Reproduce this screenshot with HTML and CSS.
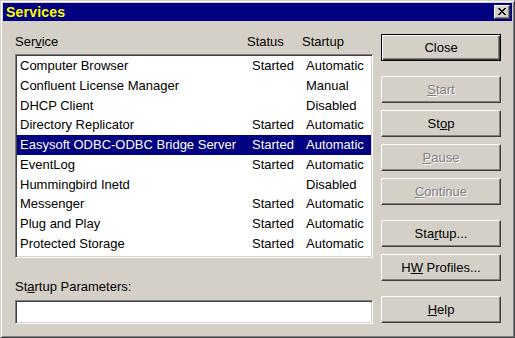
FILE: index.html
```html
<!DOCTYPE html>
<html lang="en">
<head>
    <meta charset="UTF-8">
    <title>Services</title>
    <link rel="stylesheet" href="styles.css">
</head>
<body>

<div class="window">
    <div class="titlebar">
        <span class="title">Services</span>
        <span class="title-close">
            <svg width="8" height="7" viewBox="0 0 8 7">
                <path d="M0 0h2v1h1v1h2v-1h1v-1h2v1h-1v1h-1v1h-1v1h1v1h1v1h1v1h-2v-1h-1v-1h-2v1h-1v1h-2v-1h1v-1h1v-1h1v-1h-1v-1h-1z" fill="#000"/>
            </svg>
        </span>
    </div>

    <div class="content">
        <div class="main">
            <div class="list-head">
                <span>Ser<u>v</u>ice</span>
                <span>Status</span>
                <span>Startup</span>
            </div>

            <!-- services list -->
            <div class="list">
                <div class="row"><span>Computer Browser</span><span>Started</span><span>Automatic</span></div>
                <div class="row"><span>Confluent License Manager</span><span></span><span>Manual</span></div>
                <div class="row"><span>DHCP Client</span><span></span><span>Disabled</span></div>
                <div class="row"><span>Directory Replicator</span><span>Started</span><span>Automatic</span></div>
                <div class="row selected"><span>Easysoft ODBC-ODBC Bridge Server</span><span>Started</span><span>Automatic</span></div>
                <div class="row"><span>EventLog</span><span>Started</span><span>Automatic</span></div>
                <div class="row"><span>Hummingbird Inetd</span><span></span><span>Disabled</span></div>
                <div class="row"><span>Messenger</span><span>Started</span><span>Automatic</span></div>
                <div class="row"><span>Plug and Play</span><span>Started</span><span>Automatic</span></div>
                <div class="row"><span>Protected Storage</span><span>Started</span><span>Automatic</span></div>
            </div>

            <div class="param-label">St<u>a</u>rtup Parameters:</div>
            <div class="param-input"></div>
        </div>

        <div class="buttons">
            <div class="btn default"><span>Close</span></div>
            <div class="btn disabled group"><span><u>S</u>tart</span></div>
            <div class="btn"><span>St<u>o</u>p</span></div>
            <div class="btn disabled"><span><u>P</u>ause</span></div>
            <div class="btn disabled"><span><u>C</u>ontinue</span></div>
            <div class="btn group"><span>Sta<u>r</u>tup...</span></div>
            <div class="btn"><span>H<u>W</u> Profiles...</span></div>
            <div class="btn group"><span><u>H</u>elp</span></div>
        </div>
    </div>
</div>

</body>
</html>
```

FILE: styles.css
```css
body {
    margin: 0;
    padding: 0;
    font-family: "Liberation Sans", Arial, sans-serif;
    font-size: 13px;
    color: #000;
    background-color: #d4d0c8;
}
.window {
    box-sizing: border-box;
    width: 515px;
    height: 338px;
    padding: 2px;
    background-color: #d4d0c8;
    border: 1px solid;
    border-color: #d4d0c8 #404040 #404040 #d4d0c8;
    box-shadow: inset 1px 1px #fff, inset -1px -1px #808080;
}
.titlebar {
    height: 18px;
    background-color: #000080;
    display: flex;
    align-items: center;
    justify-content: space-between;
    padding: 0 2px 0 3px;
}
.title {
    color: #ffff00;
    font-weight: bold;
    font-size: 14px;
    letter-spacing: 0.2px;
}
.title-close {
    box-sizing: border-box;
    width: 16px;
    height: 14px;
    background-color: #d4d0c8;
    border: 1px solid;
    border-color: #fff #404040 #404040 #fff;
    box-shadow: inset -1px -1px #808080;
    display: flex;
    align-items: center;
    justify-content: center;
    padding: 0 1px 1px 0;
}
.title-close svg {
    display: block;
}
.content {
    display: flex;
    gap: 8px;
    padding: 0 11px 0 12px;
}
.main {
    width: 358px;
}
.list-head {
    display: grid;
    grid-template-columns: 232px 55px 1fr;
    margin-top: 13px;
    line-height: 15px;
}
.list {
    box-sizing: border-box;
    height: 204px;
    margin-top: 5px;
    padding: 1px;
    background-color: #fff;
    border: 1px solid;
    border-color: #808080 #fff #fff #808080;
    box-shadow: inset 1px 1px #404040, inset -1px -1px #d4d0c8;
}
.row {
    display: grid;
    grid-template-columns: 232px 54px 1fr;
    height: 19.75px;
    line-height: 19.75px;
    white-space: nowrap;
}
.row span {
    padding-left: 3px;
}
.row.selected {
    background-color: #000080;
    color: #fff;
}
.param-label {
    margin-top: 21px;
    line-height: 15px;
}
.param-input {
    box-sizing: border-box;
    height: 24px;
    margin-top: 6px;
    background-color: #fff;
    border: 1px solid;
    border-color: #808080 #fff #fff #808080;
    box-shadow: inset 1px 1px #404040, inset -1px -1px #d4d0c8;
}
.buttons {
    width: 120px;
    display: flex;
    flex-direction: column;
    padding-top: 13px;
}
.btn {
    box-sizing: border-box;
    height: 27px;
    margin-top: 7px;
    display: flex;
    align-items: center;
    justify-content: center;
    border: 1px solid;
    border-color: #fff #404040 #404040 #fff;
    box-shadow: inset -1px -1px #808080;
    padding-bottom: 1px;
}
.btn.group {
    margin-top: 15px;
}
.btn.default {
    margin-top: 0;
    border-color: #000;
    box-shadow: inset 1px 1px #fff, inset -1px -1px #404040, inset -2px -2px #808080;
}
.btn.disabled {
    color: #808080;
    text-shadow: 1px 1px 0 #fff;
}
```
